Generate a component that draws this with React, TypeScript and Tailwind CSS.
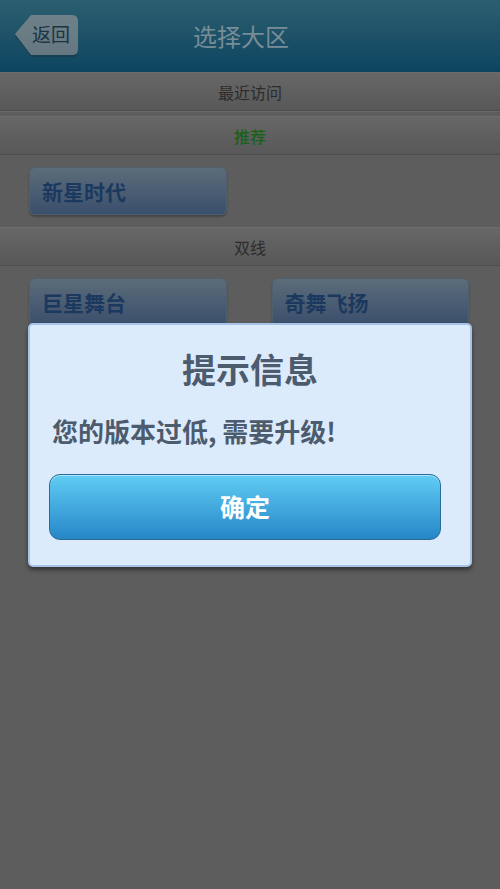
import React from "react";

type Server = { name: string };

const recommended: Server[] = [{ name: "新星时代" }];
const dualLine: Server[] = [{ name: "巨星舞台" }, { name: "奇舞飞扬" }];

function SectionBar({ title, green }: { title: string; green?: boolean }) {
  return (
    <div className="h-[39px] flex items-center justify-center bg-gradient-to-b from-[#676767] to-[#585858] border-t border-[#6d6d6d] border-b border-b-[#4e4e4e]">
      <span className={`text-[16px] leading-none ${green ? "text-[#17621b] font-medium" : "text-[#2c2c2c]"}`}>
        {title}
      </span>
    </div>
  );
}

function ServerCard({ server }: { server: Server }) {
  return (
    <div className="h-[48px] rounded-[6px] border border-[#4f5f6d] bg-gradient-to-b from-[#5c6c79] to-[#3a4f6c] shadow-[0_2px_2px_rgba(0,0,0,0.25)] flex items-center pl-[12px]">
      <span className="text-[21px] font-bold text-[#1b395f] leading-none">{server.name}</span>
    </div>
  );
}

function ServerGrid({ servers }: { servers: Server[] }) {
  return (
    <div className="grid grid-cols-2 gap-x-[45px] pl-[29px] pr-[31px] pt-[12px] pb-[12px]">
      {servers.map((s) => (
        <ServerCard key={s.name} server={s} />
      ))}
    </div>
  );
}

function BackButton() {
  return (
    <div className="relative w-[66px] h-[44px]">
      <svg className="absolute inset-0" width="66" height="44" viewBox="0 0 66 44">
        <defs>
          <linearGradient id="bb" x1="0" y1="0" x2="0" y2="1">
            <stop offset="0" stopColor="#6f8188" />
            <stop offset="1" stopColor="#647780" />
          </linearGradient>
        </defs>
        <path d="M1 22 L17 3 H58 Q64 3 64 9 V37 Q64 43 58 43 H17 Z" fill="#173848" opacity="0.6" />
        <path d="M1 20 L17 1 H58 Q64 1 64 7 V35 Q64 41 58 41 H17 Z" fill="url(#bb)" />
      </svg>
      <span className="absolute left-[18px] top-[9px] text-[19px] leading-[22px] text-[#1a3444]">返回</span>
    </div>
  );
}

export default function App() {
  return (
    <div
      className="relative w-full h-[889px] overflow-hidden bg-[#5d5d5d]"
      style={{ fontFamily: '"Noto Sans CJK SC", "Noto Sans", sans-serif' }}
    >
      <header className="h-[72px] bg-gradient-to-b from-[#2b5f6f] to-[#0c4460] grid grid-cols-[1fr_auto_1fr] items-center px-[14px]">
        <BackButton />
        <h1 className="text-[24px] text-[#798d97] leading-none mr-[18px]">选择大区</h1>
        <div />
      </header>

      <SectionBar title="最近访问" />
      <div className="h-[5px] border-t border-[#6a6a6a]" />
      <SectionBar title="推荐" green />
      <ServerGrid servers={recommended} />
      <SectionBar title="双线" />
      <ServerGrid servers={dualLine} />

      <div className="absolute inset-0 flex items-center justify-center">
        <div className="w-[444px] h-[244px] rounded-[5px] border-2 border-[#a7c4e7] bg-[#dcebfc] shadow-[0_3px_4px_rgba(0,0,0,0.45)] pl-[19px] pr-[29px] pt-[24px]">
          <h2 className="text-center text-[34px] font-bold leading-[40px] text-[#4c5b6d] pl-[10px]">提示信息</h2>
          <p className="mt-[25px] pl-[3px] text-[26px] font-bold leading-[34px] text-[#4c5b6d]">
            您的版本过低, 需要升级!
          </p>
          <button className="mt-[26px] w-full h-[66px] rounded-[11px] border-[1.5px] border-[#2a6b97] bg-gradient-to-b from-[#60cdf4] to-[#2686c7] shadow-[inset_0_1px_0_rgba(255,255,255,0.5)] text-white text-[25px] font-bold leading-none">
            确定
          </button>
        </div>
      </div>
    </div>
  );
}
